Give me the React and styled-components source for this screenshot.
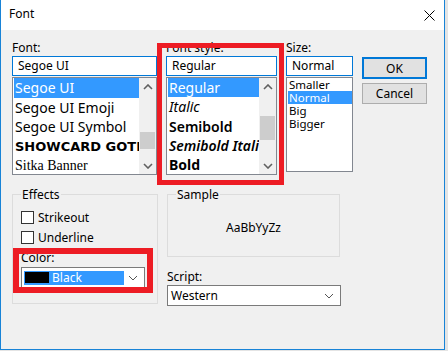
import React from 'react';
import styled, { createGlobalStyle } from 'styled-components';

const GlobalStyle = createGlobalStyle`
    html, body {
        margin: 0;
        padding: 0;
    }
    body {
        font-family: "Noto Sans", "DejaVu Sans", sans-serif;
        font-size: 12px;
        color: #000;
        background: #e4e4e4;
    }
`;

const Screen = styled.div`
    display: flex;
    width: 448px;
    height: 351px;
    overflow: hidden;
`;

const Window = styled.div`
    width: 443px;
    height: 349px;
    border: 1px solid #1883d7;
    border-top: none;
    display: flex;
    flex-direction: column;
    background: #f0f0f0;
`;

const TitleBar = styled.div`
    height: 30px;
    flex-shrink: 0;
    background: #fff;
    display: flex;
    align-items: center;
    justify-content: space-between;
    padding: 0 9px 0 8px;
`;

const Title = styled.span`
    font-size: 12px;
    line-height: 16px;
    margin-top: -2px;
`;

const Body = styled.div`
    position: relative;
    flex: 1;
    padding: 10px 0 0 11px;
    display: flex;
    flex-direction: column;
`;

const TopRow = styled.div`
    display: flex;
    align-items: flex-start;
    gap: 9px;
`;

const Column = styled.div`
    width: ${(p) => p.$w}px;
    display: flex;
    flex-direction: column;
`;

const Label = styled.div`
    height: 16px;
    line-height: 16px;
    white-space: nowrap;
`;

const Input = styled.div`
    box-sizing: border-box;
    height: 20px;
    border: 1px solid #0078d7;
    background: #fff;
    padding-left: 5px;
    line-height: 18px;
    white-space: nowrap;
    overflow: hidden;
`;

const ListBox = styled.div`
    box-sizing: border-box;
    margin-top: 1px;
    height: ${(p) => p.$h}px;
    border: 1px solid #828790;
    background: #fff;
    display: flex;
    overflow: hidden;
`;

const Items = styled.div`
    flex: 1;
    min-width: 0;
    padding-left: 1px;
    overflow: hidden;
`;

const Item = styled.div`
    height: ${(p) => p.$rh}px;
    line-height: ${(p) => p.$rh}px;
    white-space: nowrap;
    padding-left: 1px;
    font-family: ${(p) => p.$family || '"Noto Sans", sans-serif'};
    font-size: ${(p) => p.$size || 14}px;
    font-weight: ${(p) => p.$weight || 400};
    font-style: ${(p) => (p.$italic ? 'italic' : 'normal')};
    text-transform: ${(p) => (p.$upper ? 'uppercase' : 'none')};
    background: ${(p) => (p.$selected ? '#3399ff' : 'transparent')};
    color: ${(p) => (p.$selected ? '#fff' : '#000')};
`;

const ScrollBar = styled.div`
    width: 17px;
    flex-shrink: 0;
    background: #f0f0f0;
    display: flex;
    flex-direction: column;
`;

const ArrowBox = styled.div`
    height: 17px;
    display: flex;
    align-items: center;
    justify-content: center;
`;

const Track = styled.div`
    flex: 1;
    display: flex;
    flex-direction: column;
    align-items: center;
`;

const Thumb = styled.div`
    width: 15px;
    background: #cdcdcd;
`;

const ButtonCol = styled.div`
    width: 65px;
    margin-top: 17px;
    display: flex;
    flex-direction: column;
    gap: 4px;
`;

const Button = styled.div`
    box-sizing: border-box;
    height: ${(p) => (p.$primary ? 22 : 21)}px;
    background: #e1e1e1;
    border: ${(p) => (p.$primary ? '2px solid #0078d7' : '1px solid #adadad')};
    display: flex;
    align-items: center;
    justify-content: center;
`;

const BottomRow = styled.div`
    display: flex;
    align-items: flex-start;
    gap: 9px;
    margin-top: 19px;
`;

const Group = styled.div`
    box-sizing: border-box;
    width: ${(p) => p.$w}px;
    height: ${(p) => p.$h}px;
    border: 1px solid #dcdcdc;
    padding: 0 0 0 ${(p) => p.$pl}px;
    display: flex;
    flex-direction: column;
`;

const GroupTitle = styled.span`
    align-self: flex-start;
    margin-top: -7px;
    padding: 0 1px;
    line-height: 14px;
    background: #f0f0f0;
`;

const CheckRow = styled.label`
    height: 20px;
    display: flex;
    align-items: center;
    gap: 4px;
    margin-top: ${(p) => p.$mt || 0}px;
`;

const CheckBox = styled.span`
    box-sizing: border-box;
    width: 13px;
    height: 13px;
    border: 1px solid #333;
    background: #fff;
`;

const SmallLabel = styled.div`
    line-height: 14px;
    margin-top: ${(p) => p.$mt || 0}px;
`;

const Combo = styled.div`
    box-sizing: border-box;
    width: ${(p) => p.$w}px;
    height: 21px;
    margin-top: ${(p) => p.$mt || 0}px;
    border: 1px solid #7a7a7a;
    background: #fff;
    padding: 2px 6px 2px ${(p) => p.$pl}px;
    display: flex;
    align-items: center;
`;

const ColorPick = styled.div`
    width: 100px;
    height: 14px;
    background: #3399ff;
    color: #fff;
    display: flex;
    align-items: center;
    gap: 3px;
    line-height: 14px;
`;

const Swatch = styled.span`
    width: 24px;
    height: 11px;
    margin-left: 1px;
    background: #000;
`;

const ComboText = styled.span`
    flex: 1;
    line-height: 14px;
`;

const RightCol = styled.div`
    display: flex;
    flex-direction: column;
`;

const SampleText = styled.div`
    flex: 1;
    display: flex;
    align-items: center;
    justify-content: center;
    padding: 0 8px 3px 0;
`;

const RedBox = styled.div`
    position: absolute;
    box-sizing: border-box;
    left: ${(p) => p.$x}px;
    top: ${(p) => p.$y}px;
    width: ${(p) => p.$w}px;
    height: ${(p) => p.$h}px;
    border: ${(p) => p.$b}px solid #ed1c24;
    pointer-events: none;
`;

const Chevron = ({ up, color = '#606060', w = 8, sw = 1.6 }) => (
    <svg width={w + 2} height={6} viewBox={`0 0 ${w + 2} 6`}>
        <polyline
            points={up ? `1,5 ${w / 2 + 1},1 ${w + 1},5` : `1,1 ${w / 2 + 1},5 ${w + 1},1`}
            fill="none"
            stroke={color}
            strokeWidth={sw}
        />
    </svg>
);

const CloseIcon = () => (
    <svg width="11" height="11" viewBox="0 0 11 11">
        <path d="M0.5 0.5 L10.5 10.5 M10.5 0.5 L0.5 10.5" stroke="#000" strokeWidth="1" />
    </svg>
);

const List = ({ h, rh, items, thumbTop, thumbH, scroll = true }) => (
    <ListBox $h={h}>
        <Items>
            {items.map((it) => (
                <Item key={it.text} $rh={rh} {...it.style} $selected={it.selected}>
                    {it.text}
                </Item>
            ))}
        </Items>
        {scroll && (
            <ScrollBar>
                <ArrowBox>
                    <Chevron up />
                </ArrowBox>
                <Track>
                    <Thumb style={{ marginTop: thumbTop, height: thumbH }} />
                </Track>
                <ArrowBox>
                    <Chevron />
                </ArrowBox>
            </ScrollBar>
        )}
    </ListBox>
);

const fontItems = [
    { text: 'Segoe UI', selected: true },
    { text: 'Segoe UI Emoji' },
    { text: 'Segoe UI Symbol' },
    {
        text: 'Showcard Gothic',
        style: { $family: '"DejaVu Sans", sans-serif', $weight: 800, $upper: true, $size: 13 },
    },
    { text: 'Sitka Banner', style: { $family: '"Liberation Serif", serif', $size: 14 } },
];

const styleItems = [
    { text: 'Regular', selected: true },
    { text: 'Italic', style: { $italic: true } },
    { text: 'Semibold', style: { $weight: 600 } },
    { text: 'Semibold Italic', style: { $weight: 600, $italic: true } },
    { text: 'Bold', style: { $weight: 700 } },
];

const sizeItems = ['Smaller', 'Normal', 'Big', 'Bigger'].map((t) => ({
    text: t,
    selected: t === 'Normal',
    style: { $size: 11.5 },
}));

export default function App() {
    return (
        <>
            <GlobalStyle />
            <Screen>
                <Window>
                    <TitleBar>
                        <Title>Font</Title>
                        <CloseIcon />
                    </TitleBar>
                    <Body>
                        <TopRow>
                            <Column $w={145}>
                                <Label>Font:</Label>
                                <Input>Segoe UI</Input>
                                <List h={98} rh={19.5} items={fontItems} thumbTop={37} thumbH={17} />
                            </Column>
                            <Column $w={111}>
                                <Label>Font style:</Label>
                                <Input>Regular</Input>
                                <List h={98} rh={19.3} items={styleItems} thumbTop={21} thumbH={24} />
                            </Column>
                            <Column $w={67}>
                                <Label>Size:</Label>
                                <Input>Normal</Input>
                                <List h={95} rh={13} items={sizeItems} scroll={false} />
                            </Column>
                            <ButtonCol>
                                <Button $primary>OK</Button>
                                <Button>Cancel</Button>
                            </ButtonCol>
                        </TopRow>
                        <BottomRow>
                            <Group $w={146} $h={110} $pl={8}>
                                <GroupTitle>Effects</GroupTitle>
                                <CheckRow $mt={5}>
                                    <CheckBox />
                                    Strikeout
                                </CheckRow>
                                <CheckRow>
                                    <CheckBox />
                                    Underline
                                </CheckRow>
                                <SmallLabel $mt={4}>Color:</SmallLabel>
                                <Combo $w={124} $mt={2} $pl={2}>
                                    <ColorPick>
                                        <Swatch />
                                        Black
                                    </ColorPick>
                                    <ComboText />
                                    <Chevron w={8} sw={1} color="#555" />
                                </Combo>
                            </Group>
                            <RightCol>
                                <Group $w={173} $h={63} $pl={8}>
                                    <GroupTitle>Sample</GroupTitle>
                                    <SampleText>AaBbYyZz</SampleText>
                                </Group>
                                <SmallLabel $mt={13}>Script:</SmallLabel>
                                <Combo $w={174} $mt={1} $pl={3}>
                                    <ComboText>Western</ComboText>
                                    <Chevron w={8} sw={1} color="#555" />
                                </Combo>
                            </RightCol>
                        </BottomRow>
                        <RedBox $x={156} $y={13} $w={127} $h={142} $b={5} />
                        <RedBox $x={12} $y={218} $w={140} $h={45} $b={6} />
                    </Body>
                </Window>
            </Screen>
        </>
    );
}
